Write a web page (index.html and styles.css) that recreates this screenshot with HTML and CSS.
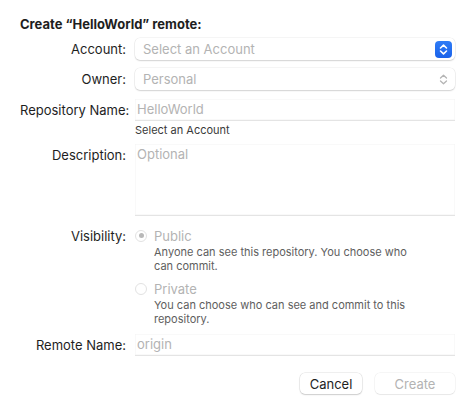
FILE: index.html
```html
<!DOCTYPE html>
<html lang="en">
<head>
  <meta charset="UTF-8">
  <meta name="viewport" content="width=device-width, initial-scale=1.0">
  <title>Create Remote</title>
  <link rel="stylesheet" href="styles.css">
</head>
<body>
  <div class="sheet">
    <h2 class="title">Create “HelloWorld” remote:</h2>
    <div class="form">
      <label class="label row-account">Account:</label>
      <div class="popup row-account">
        <span class="placeholder">Select an Account</span>
        <span class="stepper blue">
          <svg width="9" height="11" viewBox="0 0 9 11"><path d="M1.5 4 L4.5 1.2 L7.5 4 M1.5 7 L4.5 9.8 L7.5 7" fill="none" stroke="#fff" stroke-width="1.6" stroke-linecap="round" stroke-linejoin="round"/></svg>
        </span>
      </div>

      <label class="label row-owner">Owner:</label>
      <div class="popup row-owner">
        <span class="placeholder">Personal</span>
        <span class="stepper">
          <svg width="9" height="11" viewBox="0 0 9 11"><path d="M1.5 4 L4.5 1.2 L7.5 4 M1.5 7 L4.5 9.8 L7.5 7" fill="none" stroke="#b4b4b4" stroke-width="1.3" stroke-linecap="round" stroke-linejoin="round"/></svg>
        </span>
      </div>

      <label class="label row-repo">Repository Name:</label>
      <div class="field-wrap row-repo">
        <div class="field"><span class="placeholder">HelloWorld</span></div>
        <div class="hint">Select an Account</div>
      </div>

      <label class="label row-desc">Description:</label>
      <div class="field area row-desc"><span class="placeholder">Optional</span></div>

      <label class="label row-vis">Visibility:</label>
      <div class="options row-vis">
        <div class="option">
          <div class="option-head"><span class="radio checked"></span><span class="option-name">Public</span></div>
          <p class="option-text">Anyone can see this repository. You choose who can commit.</p>
        </div>
        <div class="option">
          <div class="option-head"><span class="radio"></span><span class="option-name">Private</span></div>
          <p class="option-text">You can choose who can see and commit to this repository.</p>
        </div>
      </div>

      <label class="label row-remote">Remote Name:</label>
      <div class="field row-remote"><span class="placeholder">origin</span></div>
    </div>

    <div class="buttons">
      <button class="btn cancel">Cancel</button>
      <button class="btn disabled">Create</button>
    </div>
  </div>
</body>
</html>
```

FILE: styles.css
```css
body {
  margin: 0;
  background: #ffffff;
  font-family: Inter, "Liberation Sans", Arial, sans-serif;
  font-size: 13px;
  color: #1e1e1e;
}

.sheet {
  height: 412px;
  box-sizing: border-box;
  padding: 16px 19px 0 20px;
}

.title {
  margin: 0 0 6px;
  font-size: 13px;
  font-weight: 700;
  line-height: 16px;
}

.form {
  display: grid;
  grid-template-columns: 106px 1fr;
  column-gap: 9px;
  align-items: start;
}

.label {
  text-align: right;
  line-height: 22px;
  white-space: nowrap;
}

.placeholder {
  color: #b3b3b3;
}

.popup {
  height: 22px;
  border-radius: 5px;
  background: #fff;
  box-shadow: 0 0 0 0.5px rgba(0, 0, 0, 0.08), 0 1px 1.5px rgba(0, 0, 0, 0.14);
  display: flex;
  align-items: center;
  justify-content: space-between;
  padding: 0 3px 0 8px;
  margin-bottom: 8px;
  line-height: 22px;
}

.stepper {
  width: 17px;
  height: 17px;
  display: flex;
  align-items: center;
  justify-content: center;
  border-radius: 4px;
}

.stepper.blue {
  background: linear-gradient(#2f7cf6, #1a62ea);
}

.field {
  height: 21px;
  line-height: 21px;
  padding: 0 2px;
  border-bottom: 1px solid #e4e4e4;
  box-shadow: inset 0 0 0 0.5px #f4f4f4;
}

.field-wrap {
  margin-bottom: 7px;
}

.row-owner.popup {
  margin-bottom: 9px;
}

.hint {
  font-size: 11px;
  line-height: 14px;
  margin-top: 2px;
  color: #3a3a3a;
}

.area {
  height: 71px;
  margin-bottom: 9px;
}

.option {
  margin-bottom: 5px;
}

.option:last-child {
  margin-bottom: 8px;
}

.option-head {
  display: flex;
  align-items: center;
  gap: 7px;
  height: 21px;
}

.radio {
  width: 12px;
  height: 12px;
  border-radius: 50%;
  border: 1px solid #e2e2e2;
  box-sizing: border-box;
  background: #fff;
  display: flex;
  align-items: center;
  justify-content: center;
}

.radio.checked::after {
  content: "";
  width: 5px;
  height: 5px;
  border-radius: 50%;
  background: #b8b8b8;
}

.option-name {
  color: #b3b3b3;
}

.option-text {
  margin: 0 0 0 19px;
  width: 270px;
  font-size: 11px;
  line-height: 13.5px;
  color: #5e5e5e;
}

.buttons {
  display: flex;
  justify-content: flex-end;
  gap: 13px;
  margin-top: 17px;
}

.btn {
  font-family: inherit;
  font-size: 13px;
  height: 21px;
  padding: 0;
  border: none;
  border-radius: 5px;
  background: #fff;
  color: #1e1e1e;
  box-shadow: 0 0 0 0.5px rgba(0, 0, 0, 0.12), 0 1px 1.5px rgba(0, 0, 0, 0.15);
}

.btn.cancel {
  width: 62px;
}

.btn.disabled {
  width: 80px;
  color: #b3b3b3;
  box-shadow: 0 0 0 0.5px rgba(0, 0, 0, 0.07), 0 1px 1px rgba(0, 0, 0, 0.06);
}
```
